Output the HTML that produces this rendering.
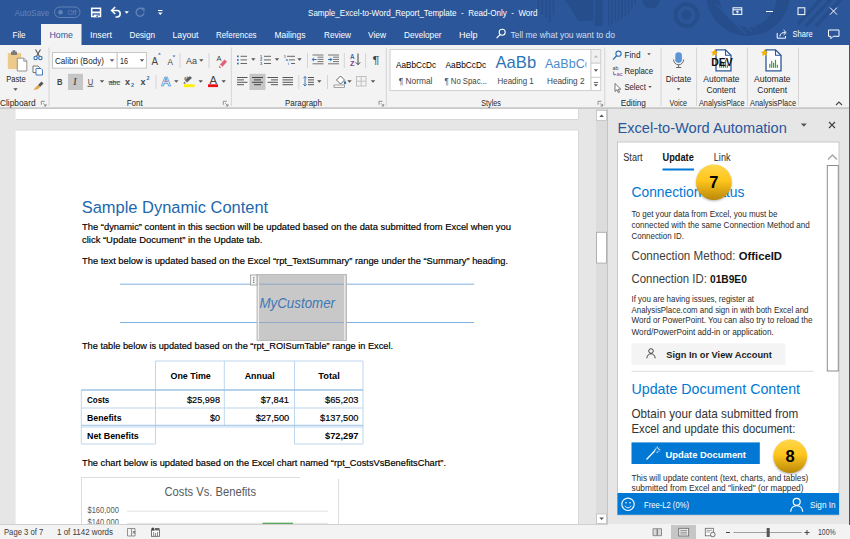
<!DOCTYPE html>
<html lang="en"><head><meta charset="utf-8"><title>Sample_Excel-to-Word_Report_Template - Read-Only - Word</title>
<style>
html,body{margin:0;padding:0;background:#e6e6e6;overflow:hidden}
body{width:850px;height:539px;position:relative;font-family:"Liberation Sans", sans-serif}
.abs{position:absolute}
#titlebar{left:0;top:0;width:850px;height:45px;background:#2b579a}
#ribbon{left:0;top:45px;width:850px;height:63px;background:#f3f3f3;border-bottom:1px solid #d2d2d2;box-sizing:border-box}
#docarea{left:0;top:108px;width:608px;height:416px;background:#e6e6e6}
#pane{left:608px;top:108px;width:242px;height:416px;background:#e6e6e6}
#statusbar{left:0;top:524px;width:850px;height:15px;background:#f3f3f3}
svg{position:absolute;left:0;top:0;font-family:"Liberation Sans", sans-serif}
svg text{white-space:pre}
</style></head><body>
<div id="titlebar" class="abs"></div>
<div id="ribbon" class="abs"></div>
<div id="docarea" class="abs"></div>
<div id="pane" class="abs"></div>
<div id="statusbar" class="abs"></div>
<svg width="850" height="539" viewBox="0 0 850 539">
<clipPath id="tbclip"><rect x="0" y="0" width="850" height="45"/></clipPath>
<g clip-path="url(#tbclip)" fill="#264e8d" stroke="none"><rect x="537.5" y="0" width="1.8" height="10"/><rect x="541.3" y="0" width="1.8" height="14"/><rect x="545" y="0" width="1.8" height="17"/><rect x="548.7" y="0" width="2" height="22"/><rect x="552.6" y="0" width="1.8" height="15"/><path d="M565 0 L578 20 L578 0z"/><rect x="578" y="0" width="15.5" height="21"/><rect x="595" y="0" width="7.5" height="26"/><rect x="608" y="0" width="1.6" height="25"/><rect x="611.3" y="0" width="1.6" height="24"/><rect x="614.6" y="0" width="1.6" height="22.5"/><rect x="617.9" y="0" width="1.6" height="21"/><rect x="621.2" y="0" width="1.6" height="19"/><rect x="624.5" y="0" width="1.6" height="16.5"/><rect x="627.8" y="0" width="1.6" height="13.5"/><rect x="631.1" y="0" width="1.6" height="9.5"/><rect x="634.4" y="0" width="1.6" height="4"/><path d="M642 0a9 8.5 0 0 0 18 0z"/><circle cx="686.5" cy="15" r="5"/><path d="M706 -6a42 42 0 0 0 84 0h-13a29 33 0 0 1 -58 0z"/></g>
<g clip-path="url(#tbclip)" fill="none" stroke="#264e8d"><circle cx="686.5" cy="15" r="11" stroke-width="4"/><path d="M822 -2L798 24M832 -2L806 26M842 -2L816 26" stroke-width="3.5"/></g>
<g clip-path="url(#tbclip)" stroke="#2b579a" stroke-width="1.6" fill="none"><path d="M716 4l30 30M722 2l30 30M728 0l28 28M734 -2l26 26"/></g>
<text x="14.7" y="16" font-size="9.3" fill="#6382b6" textLength="34.6" lengthAdjust="spacingAndGlyphs">AutoSave</text>
<rect x="54.5" y="7" width="25.5" height="10.5" fill="none" stroke="#6382b6" stroke-width="1" rx="5.2"/>
<circle cx="60.5" cy="12.2" r="2.2" fill="#6382b6"/>
<text x="67.5" y="15" font-size="7.5" fill="#6382b6" textLength="9" lengthAdjust="spacingAndGlyphs">Off</text>
<rect x="91.7" y="8.3" width="8.8" height="8.2" fill="none" stroke="#fff" stroke-width="1.5"/>
<rect x="91.7" y="11.5" width="8.8" height="1.8" fill="#fff"/>
<rect x="93.8" y="14.6" width="4.7" height="2.6" fill="#fff"/>
<rect x="96.4" y="15.4" width="1.4" height="1.8" fill="#2b579a"/>
<path d="M112 10.5h5a3.2 3.2 0 0 1 0 6.4h-1.5" fill="none" stroke="#fff" stroke-width="1.5"/>
<path d="M115.2 7l-3.6 3.5l3.6 3.5" fill="none" stroke="#fff" stroke-width="1.5"/>
<path d="M124.5 11.3h4.4l-2.2 2.4z" fill="#fff"/>
<path d="M142.9 9.4a4 4 0 1 0 1.1 3.9" fill="none" stroke="#6382b6" stroke-width="1.4"/>
<path d="M140.4 8.3h3.5v3.5" fill="none" stroke="#6382b6" stroke-width="1.3"/>
<line x1="158" y1="10.5" x2="162.5" y2="10.5" stroke="#fff" stroke-width="1" />
<path d="M158 12.5h4.6l-2.3 2.5z" fill="#fff"/>
<text x="308" y="16" font-size="9.6" fill="#fff" textLength="229.5" lengthAdjust="spacingAndGlyphs">Sample_Excel-to-Word_Report_Template  -  Read-Only  -  Word</text>
<rect x="733" y="7.8" width="8.8" height="6.6" fill="none" stroke="#fff" stroke-width="1"/>
<line x1="733" y1="9.8" x2="741.8" y2="9.8" stroke="#fff" stroke-width="1" />
<path d="M737.4 13.6V11M736 12.2l1.4-1.3l1.4 1.3" fill="none" stroke="#fff" stroke-width="0.9"/>
<line x1="766" y1="11.5" x2="773" y2="11.5" stroke="#fff" stroke-width="1" />
<rect x="798" y="7.8" width="6.8" height="6.8" fill="none" stroke="#fff" stroke-width="1"/>
<path d="M830 7.6l7 7M837 7.6l-7 7" fill="none" stroke="#fff" stroke-width="1"/>
<rect x="41" y="24" width="40.5" height="21.5" fill="#f3f3f3"/>
<text x="12.5" y="37.5" font-size="9.4" fill="#fff" textLength="13" lengthAdjust="spacingAndGlyphs">File</text>
<text x="49.5" y="37.5" font-size="9.4" fill="#2b579a" textLength="23.5" lengthAdjust="spacingAndGlyphs">Home</text>
<text x="90" y="37.5" font-size="9.4" fill="#fff" textLength="22" lengthAdjust="spacingAndGlyphs">Insert</text>
<text x="129.5" y="37.5" font-size="9.4" fill="#fff" textLength="25.5" lengthAdjust="spacingAndGlyphs">Design</text>
<text x="172.5" y="37.5" font-size="9.4" fill="#fff" textLength="26" lengthAdjust="spacingAndGlyphs">Layout</text>
<text x="216" y="37.5" font-size="9.4" fill="#fff" textLength="40.5" lengthAdjust="spacingAndGlyphs">References</text>
<text x="274.5" y="37.5" font-size="9.4" fill="#fff" textLength="31" lengthAdjust="spacingAndGlyphs">Mailings</text>
<text x="324" y="37.5" font-size="9.4" fill="#fff" textLength="27" lengthAdjust="spacingAndGlyphs">Review</text>
<text x="368" y="37.5" font-size="9.4" fill="#fff" textLength="18" lengthAdjust="spacingAndGlyphs">View</text>
<text x="404" y="37.5" font-size="9.4" fill="#fff" textLength="37.5" lengthAdjust="spacingAndGlyphs">Developer</text>
<text x="459" y="37.5" font-size="9.4" fill="#fff" textLength="18.5" lengthAdjust="spacingAndGlyphs">Help</text>
<circle cx="502.2" cy="32.2" r="3" fill="none" stroke="#fff" stroke-width="1.1"/>
<line x1="500" y1="34.6" x2="496.6" y2="38.2" stroke="#fff" stroke-width="1.2" />
<text x="510.5" y="37.5" font-size="9.2" fill="#d5deec" textLength="104.5" lengthAdjust="spacingAndGlyphs">Tell me what you want to do</text>
<path d="M777.2 33v5.2h8.3v-2.2" fill="none" stroke="#fff" stroke-width="1"/>
<path d="M779.8 36.5c0.3-2.8 2.2-4 5.4-4M783.6 30l2.6 2.5l-2.6 2.5" fill="none" stroke="#fff" stroke-width="1"/>
<text x="792.6" y="37.4" font-size="9.4" fill="#fff" textLength="20" lengthAdjust="spacingAndGlyphs">Share</text>
<path d="M828.5 30h10.5v6.3h-5.8l-2.4 2.4v-2.4h-2.3z" fill="none" stroke="#fff" stroke-width="1"/>
<line x1="49" y1="47.5" x2="49" y2="106" stroke="#d4d4d4" stroke-width="1" />
<line x1="231.3" y1="47.5" x2="231.3" y2="106" stroke="#d4d4d4" stroke-width="1" />
<line x1="386.3" y1="47.5" x2="386.3" y2="106" stroke="#d4d4d4" stroke-width="1" />
<line x1="604.8" y1="47.5" x2="604.8" y2="106" stroke="#d4d4d4" stroke-width="1" />
<line x1="661" y1="47.5" x2="661" y2="106" stroke="#d4d4d4" stroke-width="1" />
<line x1="696.6" y1="47.5" x2="696.6" y2="106" stroke="#d4d4d4" stroke-width="1" />
<line x1="747.4" y1="47.5" x2="747.4" y2="106" stroke="#d4d4d4" stroke-width="1" />
<line x1="798.5" y1="47.5" x2="798.5" y2="106" stroke="#d4d4d4" stroke-width="1" />
<text x="0" y="105.7" font-size="8.7" fill="#262626" textLength="35.6" lengthAdjust="spacingAndGlyphs">Clipboard</text>
<text x="126.7" y="105.7" font-size="8.7" fill="#262626" textLength="16" lengthAdjust="spacingAndGlyphs">Font</text>
<text x="285" y="105.7" font-size="8.7" fill="#262626" textLength="36.8" lengthAdjust="spacingAndGlyphs">Paragraph</text>
<text x="481.3" y="105.7" font-size="8.7" fill="#262626" textLength="19.5" lengthAdjust="spacingAndGlyphs">Styles</text>
<text x="620.7" y="105.7" font-size="8.7" fill="#262626" textLength="25.3" lengthAdjust="spacingAndGlyphs">Editing</text>
<text x="669.6" y="105.7" font-size="8.7" fill="#262626" textLength="17.5" lengthAdjust="spacingAndGlyphs">Voice</text>
<text x="699" y="105.7" font-size="8.7" fill="#262626" textLength="45.5" lengthAdjust="spacingAndGlyphs">AnalysisPlace</text>
<text x="750" y="105.7" font-size="8.7" fill="#262626" textLength="46" lengthAdjust="spacingAndGlyphs">AnalysisPlace</text>
<path d="M41.3 104.8v-3.5h3.5" fill="none" stroke="#777" stroke-width="0.8"/>
<path d="M43.3 103.3l2.5 2.5M46.0 103.89999999999999v2.1h-2.1" fill="none" stroke="#777" stroke-width="0.8"/>
<path d="M223.3 104.8v-3.5h3.5" fill="none" stroke="#777" stroke-width="0.8"/>
<path d="M225.3 103.3l2.5 2.5M228.0 103.89999999999999v2.1h-2.1" fill="none" stroke="#777" stroke-width="0.8"/>
<path d="M379 104.8v-3.5h3.5" fill="none" stroke="#777" stroke-width="0.8"/>
<path d="M381 103.3l2.5 2.5M383.7 103.89999999999999v2.1h-2.1" fill="none" stroke="#777" stroke-width="0.8"/>
<path d="M598 104.8v-3.5h3.5" fill="none" stroke="#777" stroke-width="0.8"/>
<path d="M600 103.3l2.5 2.5M602.7 103.89999999999999v2.1h-2.1" fill="none" stroke="#777" stroke-width="0.8"/>
<path d="M836 105l3-3l3 3" fill="none" stroke="#444" stroke-width="1.1"/>
<rect x="7.8" y="53" width="13.4" height="16" fill="#edc98a" rx="1"/>
<rect x="11" y="51.5" width="6" height="3.5" fill="#7a7a7a" rx="0.8"/>
<rect x="12.7" y="50.2" width="2.6" height="2" fill="#7a7a7a"/>
<path d="M17.3 58.2h6.5l3 3v9.8h-9.5z" fill="#fff" stroke="#8a8a8a" stroke-width="0.9"/>
<path d="M23.8 58.2v3h3" fill="none" stroke="#8a8a8a" stroke-width="0.9"/>
<text x="6.2" y="81.7" font-size="9" fill="#262626" textLength="19.5" lengthAdjust="spacingAndGlyphs">Paste</text>
<path d="M13.3 88.3h4.4l-2.2 2.4z" fill="#555"/>
<path d="M35.5 49.5l4.2 7.2M40.5 49.5l-4.2 7.2" fill="none" stroke="#555" stroke-width="1.1"/>
<circle cx="35.6" cy="58" r="1.7" fill="none" stroke="#2f6fb5" stroke-width="1.1"/><circle cx="40.4" cy="58" r="1.7" fill="none" stroke="#2f6fb5" stroke-width="1.1"/>
<path d="M33 66h5l1.5 1.5v5h-6.5z" fill="#fff" stroke="#666" stroke-width="0.9"/>
<path d="M36 68.5h5l1.5 1.5v5h-6.5z" fill="#fff" stroke="#2f6fb5" stroke-width="0.9"/>
<path d="M41.5 81.5l2 2l-3.5 3.5l-2-2z" fill="#555"/>
<path d="M38 85l2 2c-1.5 2.5-4 3.2-6.5 2.5c1.5-1 2.2-3 4.5-4.5z" fill="#e3a84a"/>
<rect x="52.5" y="52.5" width="64.7" height="15.7" fill="#fff" stroke="#c6c6c6" stroke-width="1"/>
<rect x="117.2" y="52.5" width="29.2" height="15.7" fill="#fff" stroke="#c6c6c6" stroke-width="1"/>
<text x="55" y="63.8" font-size="9" fill="#262626" textLength="49" lengthAdjust="spacingAndGlyphs">Calibri (Body)</text>
<text x="120" y="63.8" font-size="9" fill="#262626" textLength="8" lengthAdjust="spacingAndGlyphs">16</text>
<path d="M109.8 59.3h4.4l-2.2 2.4z" fill="#555"/>
<path d="M139.8 59.3h4.4l-2.2 2.4z" fill="#555"/>
<text x="151.6" y="65" font-size="10" fill="#444" textLength="6.5" lengthAdjust="spacingAndGlyphs">A</text>
<path d="M158 54.5l1.5-1.8l1.5 1.8z" fill="#2f6fb5"/>
<text x="167.5" y="65" font-size="8.5" fill="#444" textLength="5.5" lengthAdjust="spacingAndGlyphs">A</text>
<path d="M172.5 55.5l1.5 1.8l1.5-1.8z" fill="#2f6fb5"/>
<line x1="180" y1="53" x2="180" y2="68" stroke="#d4d4d4" stroke-width="1" />
<text x="186" y="64" font-size="9.5" fill="#444" textLength="11" lengthAdjust="spacingAndGlyphs">Aa</text>
<path d="M199.10000000000002 59.3h4.4l-2.2 2.4z" fill="#555"/>
<line x1="209" y1="53" x2="209" y2="68" stroke="#d4d4d4" stroke-width="1" />
<text x="216.5" y="61" font-size="7.5" fill="#444" textLength="5" lengthAdjust="spacingAndGlyphs">A</text>
<path d="M220 64.5l4.5-5l2.5 2.3l-4.5 5z" fill="#e2607a"/>
<path d="M219 65.5l2.5 2.3h-2.5z" fill="#e2607a"/>
<rect x="68" y="73.8" width="15" height="16.2" fill="#c6c6c6"/>
<text x="57" y="85" font-size="9" fill="#444" textLength="5.5" lengthAdjust="spacingAndGlyphs" font-weight="bold">B</text>
<text x="73.5" y="85" font-size="9.5" fill="#444" textLength="3" lengthAdjust="spacingAndGlyphs" font-style="italic" font-family="Liberation Serif,serif" font-weight="bold">I</text>
<text x="87.8" y="84.5" font-size="9" fill="#444" textLength="5.5" lengthAdjust="spacingAndGlyphs">U</text>
<line x1="87.5" y1="86.3" x2="93.5" y2="86.3" stroke="#444" stroke-width="0.9" />
<path d="M99.8 80.3h4.4l-2.2 2.4z" fill="#555"/>
<text x="108.7" y="84.5" font-size="7.5" fill="#444" textLength="11.3" lengthAdjust="spacingAndGlyphs">abc</text>
<line x1="108.3" y1="82" x2="120.3" y2="82" stroke="#444" stroke-width="0.7" />
<text x="125" y="84.5" font-size="9" fill="#444" textLength="5" lengthAdjust="spacingAndGlyphs" font-weight="bold">x</text>
<text x="131" y="86.5" font-size="5" fill="#2f6fb5" textLength="3" lengthAdjust="spacingAndGlyphs" font-weight="bold">2</text>
<text x="140.5" y="84.5" font-size="9" fill="#444" textLength="5" lengthAdjust="spacingAndGlyphs" font-weight="bold">x</text>
<text x="146.5" y="80" font-size="5" fill="#2f6fb5" textLength="3" lengthAdjust="spacingAndGlyphs" font-weight="bold">2</text>
<line x1="156" y1="75" x2="156" y2="89" stroke="#d4d4d4" stroke-width="1" />
<text x="161" y="85.6" font-size="13" fill="#ffffff" textLength="9.8" lengthAdjust="spacingAndGlyphs" font-weight="bold" stroke="#3a78bd" stroke-width="0.65">A</text>
<path d="M174.10000000000002 80.3h4.4l-2.2 2.4z" fill="#555"/>
<path d="M185 80.5l5-4.5l2 2l-5 4.5zM184 81.5l2 2l-2.4 0.3z" fill="#666"/>
<text x="184" y="80" font-size="5" fill="#444" textLength="5.5" lengthAdjust="spacingAndGlyphs">ab</text>
<rect x="184" y="84.3" width="10.5" height="2.8" fill="#ffee00"/>
<path d="M198.5 80.3h4.4l-2.2 2.4z" fill="#555"/>
<text x="209.5" y="83.5" font-size="10" fill="#444" textLength="7.5" lengthAdjust="spacingAndGlyphs">A</text>
<rect x="208" y="84.3" width="10" height="2.8" fill="#ee1111"/>
<path d="M221.5 80.3h4.4l-2.2 2.4z" fill="#555"/>
<rect x="237" y="55.5" width="1.7" height="1.7" fill="#2f6fb5"/>
<line x1="240.5" y1="56.3" x2="247" y2="56.3" stroke="#666" stroke-width="1" />
<rect x="237" y="59.1" width="1.7" height="1.7" fill="#2f6fb5"/>
<line x1="240.5" y1="59.9" x2="247" y2="59.9" stroke="#666" stroke-width="1" />
<rect x="237" y="62.7" width="1.7" height="1.7" fill="#2f6fb5"/>
<line x1="240.5" y1="63.5" x2="247" y2="63.5" stroke="#666" stroke-width="1" />
<path d="M251.10000000000002 58.3h4.4l-2.2 2.4z" fill="#555"/>
<text x="260" y="57.8" font-size="3.8" fill="#2f6fb5" font-weight="bold">1</text>
<line x1="264" y1="56.3" x2="271" y2="56.3" stroke="#666" stroke-width="1" />
<text x="260" y="61.4" font-size="3.8" fill="#2f6fb5" font-weight="bold">2</text>
<line x1="264" y1="59.9" x2="271" y2="59.9" stroke="#666" stroke-width="1" />
<text x="260" y="65.0" font-size="3.8" fill="#2f6fb5" font-weight="bold">3</text>
<line x1="264" y1="63.5" x2="271" y2="63.5" stroke="#666" stroke-width="1" />
<path d="M274.8 58.3h4.4l-2.2 2.4z" fill="#555"/>
<text x="283.7" y="57.8" font-size="3.8" fill="#2f6fb5" font-weight="bold">1</text>
<line x1="287" y1="56.3" x2="295" y2="56.3" stroke="#666" stroke-width="1" />
<text x="285.7" y="61.4" font-size="3.8" fill="#2f6fb5" font-weight="bold">a</text>
<line x1="289" y1="59.9" x2="295" y2="59.9" stroke="#666" stroke-width="1" />
<text x="287.7" y="65.0" font-size="3.8" fill="#2f6fb5" font-weight="bold">i</text>
<line x1="291" y1="63.5" x2="295" y2="63.5" stroke="#666" stroke-width="1" />
<path d="M297.3 58.3h4.4l-2.2 2.4z" fill="#555"/>
<line x1="307.5" y1="53" x2="307.5" y2="68" stroke="#d4d4d4" stroke-width="1" />
<line x1="312.5" y1="55.0" x2="323.5" y2="55.0" stroke="#666" stroke-width="0.9" />
<line x1="317.5" y1="57.2" x2="323.5" y2="57.2" stroke="#666" stroke-width="0.9" />
<line x1="317.5" y1="59.4" x2="323.5" y2="59.4" stroke="#666" stroke-width="0.9" />
<line x1="317.5" y1="61.6" x2="323.5" y2="61.6" stroke="#666" stroke-width="0.9" />
<line x1="312.5" y1="63.8" x2="323.5" y2="63.8" stroke="#666" stroke-width="0.9" />
<path d="M316.5 59.5h-4M314 57.7l-1.8 1.8l1.8 1.8" fill="none" stroke="#2f6fb5" stroke-width="1"/>
<line x1="328" y1="55.0" x2="339" y2="55.0" stroke="#666" stroke-width="0.9" />
<line x1="333" y1="57.2" x2="339" y2="57.2" stroke="#666" stroke-width="0.9" />
<line x1="333" y1="59.4" x2="339" y2="59.4" stroke="#666" stroke-width="0.9" />
<line x1="333" y1="61.6" x2="339" y2="61.6" stroke="#666" stroke-width="0.9" />
<line x1="328" y1="63.8" x2="339" y2="63.8" stroke="#666" stroke-width="0.9" />
<path d="M328 59.5h4M330 57.7l1.8 1.8l-1.8 1.8" fill="none" stroke="#2f6fb5" stroke-width="1"/>
<line x1="344.3" y1="53" x2="344.3" y2="68" stroke="#d4d4d4" stroke-width="1" />
<text x="350" y="58.5" font-size="6.5" fill="#2f6fb5" textLength="4.5" lengthAdjust="spacingAndGlyphs" font-weight="bold">A</text>
<text x="350" y="65.5" font-size="6.5" fill="#7a3fa0" textLength="4.5" lengthAdjust="spacingAndGlyphs" font-weight="bold">Z</text>
<path d="M358 53.5v11M355.8 62.3l2.2 2.4l2.2-2.4" fill="none" stroke="#444" stroke-width="1"/>
<line x1="365.6" y1="53" x2="365.6" y2="68" stroke="#d4d4d4" stroke-width="1" />
<text x="372.5" y="64" font-size="11" fill="#444" textLength="7" lengthAdjust="spacingAndGlyphs">¶</text>
<rect x="249.5" y="73.8" width="16" height="16.2" fill="#c6c6c6"/>
<line x1="237" y1="77.5" x2="247.5" y2="77.5" stroke="#555" stroke-width="1" />
<line x1="237" y1="79.9" x2="244" y2="79.9" stroke="#555" stroke-width="1" />
<line x1="237" y1="82.3" x2="247.5" y2="82.3" stroke="#555" stroke-width="1" />
<line x1="237" y1="84.7" x2="244" y2="84.7" stroke="#555" stroke-width="1" />
<line x1="252" y1="77.5" x2="263" y2="77.5" stroke="#444" stroke-width="1" />
<line x1="254" y1="79.9" x2="261" y2="79.9" stroke="#444" stroke-width="1" />
<line x1="252" y1="82.3" x2="263" y2="82.3" stroke="#444" stroke-width="1" />
<line x1="254" y1="84.7" x2="261" y2="84.7" stroke="#444" stroke-width="1" />
<line x1="267.5" y1="77.5" x2="278.0" y2="77.5" stroke="#555" stroke-width="1" />
<line x1="271.0" y1="79.9" x2="278.0" y2="79.9" stroke="#555" stroke-width="1" />
<line x1="267.5" y1="82.3" x2="278.0" y2="82.3" stroke="#555" stroke-width="1" />
<line x1="271.0" y1="84.7" x2="278.0" y2="84.7" stroke="#555" stroke-width="1" />
<line x1="282.5" y1="77.5" x2="293.0" y2="77.5" stroke="#555" stroke-width="1" />
<line x1="282.5" y1="79.9" x2="293.0" y2="79.9" stroke="#555" stroke-width="1" />
<line x1="282.5" y1="82.3" x2="293.0" y2="82.3" stroke="#555" stroke-width="1" />
<line x1="282.5" y1="84.7" x2="293.0" y2="84.7" stroke="#555" stroke-width="1" />
<line x1="298.8" y1="75" x2="298.8" y2="89" stroke="#d4d4d4" stroke-width="1" />
<line x1="308" y1="77.5" x2="314" y2="77.5" stroke="#555" stroke-width="1" />
<line x1="308" y1="79.9" x2="314" y2="79.9" stroke="#555" stroke-width="1" />
<line x1="308" y1="82.3" x2="314" y2="82.3" stroke="#555" stroke-width="1" />
<line x1="308" y1="84.7" x2="314" y2="84.7" stroke="#555" stroke-width="1" />
<path d="M305 76.5v9.5M303.3 78.3l1.7-1.8l1.7 1.8M303.3 84.2l1.7 1.8l1.7-1.8" fill="none" stroke="#2f6fb5" stroke-width="0.9"/>
<path d="M317.1 80.3h4.4l-2.2 2.4z" fill="#555"/>
<line x1="327.5" y1="75" x2="327.5" y2="89" stroke="#d4d4d4" stroke-width="1" />
<path d="M336.5 80l4-4l4 4l-4 4z" fill="#fff" stroke="#555" stroke-width="0.9"/>
<path d="M345 80.5c0.8 1.3 1.2 2 1.2 2.6a1.2 1.2 0 0 1-2.4 0c0-0.6 0.4-1.3 1.2-2.6z" fill="#2f6fb5"/>
<rect x="334" y="85" width="10.5" height="2.3" fill="#fff" stroke="#777" stroke-width="0.7"/>
<path d="M347.3 80.3h4.4l-2.2 2.4z" fill="#555"/>
<g stroke="#bcbcbc" stroke-width="0.9" fill="none"><rect x="356.5" y="76.5" width="9.5" height="9.5"/><line x1="361.2" y1="76.5" x2="361.2" y2="86"/><line x1="356.5" y1="81.2" x2="366" y2="81.2"/></g>
<path d="M370.8 80.3h4.4l-2.2 2.4z" fill="#555"/>
<rect x="390" y="49.5" width="201" height="41" fill="#fff" stroke="#d0d0d0" stroke-width="1"/>
<text x="396" y="67.6" font-size="9.8" fill="#000" textLength="40" lengthAdjust="spacingAndGlyphs">AaBbCcDc</text>
<text x="398.7" y="84.1" font-size="9" fill="#444" textLength="33.8" lengthAdjust="spacingAndGlyphs">¶ Normal</text>
<text x="445.5" y="67.6" font-size="9.8" fill="#000" textLength="40.7" lengthAdjust="spacingAndGlyphs">AaBbCcDc</text>
<text x="444.5" y="84.1" font-size="9" fill="#444" textLength="42.5" lengthAdjust="spacingAndGlyphs">¶ No Spac...</text>
<text x="495.5" y="68.4" font-size="16.4" fill="#2e74b5" textLength="40.7" lengthAdjust="spacingAndGlyphs">AaBb</text>
<text x="497.5" y="84.1" font-size="9" fill="#444" textLength="36.2" lengthAdjust="spacingAndGlyphs">Heading 1</text>
<clipPath id="galclip"><rect x="390" y="49.5" width="196.5" height="41"/></clipPath>
<text x="545" y="68.4" font-size="12.3" fill="#4a8ccb" textLength="46" lengthAdjust="spacingAndGlyphs" clip-path="url(#galclip)">AaBbCc</text>
<text x="547" y="84.1" font-size="9" fill="#444" textLength="37.5" lengthAdjust="spacingAndGlyphs">Heading 2</text>
<rect x="591" y="49.5" width="9.7" height="13.7" fill="#f0f0f0" stroke="#d0d0d0" stroke-width="1"/>
<rect x="591" y="63.2" width="9.7" height="14.2" fill="#fff" stroke="#d0d0d0" stroke-width="1"/>
<rect x="591" y="77.4" width="9.7" height="13.1" fill="#fff" stroke="#d0d0d0" stroke-width="1"/>
<path d="M593.8 57.5h4.2l-2.1-2.3z" fill="#b5b5b5"/>
<path d="M593.81 69.36h4.18l-2.09 2.28z" fill="#555"/>
<line x1="593.8" y1="82.5" x2="598" y2="82.5" stroke="#555" stroke-width="0.9" />
<path d="M593.81 84.16h4.18l-2.09 2.28z" fill="#555"/>
<circle cx="618.5" cy="53.7" r="2.6" fill="none" stroke="#2f6fb5" stroke-width="1.1"/>
<line x1="616.6" y1="55.8" x2="613" y2="59.6" stroke="#2f6fb5" stroke-width="1.3" />
<text x="624.5" y="57.7" font-size="9" fill="#262626" textLength="16" lengthAdjust="spacingAndGlyphs">Find</text>
<path d="M647.24 53.24h3.5200000000000005l-1.7600000000000002 1.92z" fill="#555"/>
<text x="612.5" y="70" font-size="6" fill="#444" textLength="6" lengthAdjust="spacingAndGlyphs">ab</text>
<text x="616.5" y="75.5" font-size="6" fill="#7a3fa0" textLength="6" lengthAdjust="spacingAndGlyphs">ac</text>
<path d="M613.5 71.5v3h2M614.6 73.6l1 1l-1 1" fill="none" stroke="#2f6fb5" stroke-width="0.7"/>
<text x="624.5" y="73.7" font-size="9" fill="#262626" textLength="28.5" lengthAdjust="spacingAndGlyphs">Replace</text>
<path d="M615 83.5v8l2-1.8l1.4 3l1.2-0.6l-1.4-2.9h2.6z" fill="#fff" stroke="#555" stroke-width="0.8"/>
<text x="624.5" y="90" font-size="9" fill="#262626" textLength="21.3" lengthAdjust="spacingAndGlyphs">Select</text>
<path d="M648.24 86.04h3.5200000000000005l-1.7600000000000002 1.92z" fill="#555"/>
<rect x="675.3" y="52.3" width="6.6" height="10.6" fill="#5b95d6" rx="3.3"/>
<path d="M673.6 59.5a5 5.3 0 0 0 10 0M678.6 64.8v2.6M676 67.5h5.2" fill="none" stroke="#666" stroke-width="1"/>
<text x="665.8" y="82.1" font-size="9" fill="#262626" textLength="25.4" lengthAdjust="spacingAndGlyphs">Dictate</text>
<path d="M676.74 88.34h3.5200000000000005l-1.7600000000000002 1.92z" fill="#555"/>
<rect x="712.5" y="48.8" width="20" height="22.4" fill="#fbfbfb"/>
<path d="M716 49.8h9.5l5.5 5.5v15.5h-15z" fill="#fff" stroke="#2b579a" stroke-width="1.3"/>
<path d="M725.5 49.8v5.5h5.5" fill="none" stroke="#2b579a" stroke-width="1.1"/>
<rect x="719.2" y="63.8" width="1.2" height="4" fill="#3c9a48"/>
<rect x="721.1" y="60.8" width="1.2" height="7" fill="#3c9a48"/>
<rect x="723.0" y="62.8" width="1.2" height="5" fill="#3c9a48"/>
<rect x="724.9000000000001" y="59.8" width="1.2" height="8" fill="#3c9a48"/>
<rect x="726.8000000000001" y="64.8" width="1.2" height="3" fill="#3c9a48"/>
<path d="M714.5 49.3l1.2 2.2l2.4 0.4l-1.8 1.7l0.4 2.4l-2.2-1.2l-2.2 1.2l0.4-2.4l-1.8-1.7l2.4-0.4z" fill="#f2b200"/>
<rect x="713" y="49" width="19.5" height="22" fill="#fff" opacity="0.0"/>
<text x="711.3" y="66.4" font-size="11" fill="#111" textLength="21.5" lengthAdjust="spacingAndGlyphs" font-weight="bold">DEV</text>
<text x="703.3" y="82.1" font-size="9" fill="#262626" textLength="36.2" lengthAdjust="spacingAndGlyphs">Automate</text>
<text x="706.4" y="93.2" font-size="9" fill="#262626" textLength="29.2" lengthAdjust="spacingAndGlyphs">Content</text>
<path d="M766 49.8h9.5l5.5 5.5v15.5h-15z" fill="#fff" stroke="#2b579a" stroke-width="1.3"/>
<path d="M775.5 49.8v5.5h5.5" fill="none" stroke="#2b579a" stroke-width="1.1"/>
<rect x="769.2" y="63.8" width="1.2" height="4" fill="#3c9a48"/>
<rect x="771.1" y="60.8" width="1.2" height="7" fill="#3c9a48"/>
<rect x="773.0" y="62.8" width="1.2" height="5" fill="#3c9a48"/>
<rect x="774.9000000000001" y="59.8" width="1.2" height="8" fill="#3c9a48"/>
<rect x="776.8000000000001" y="64.8" width="1.2" height="3" fill="#3c9a48"/>
<path d="M764.5 49.3l1.2 2.2l2.4 0.4l-1.8 1.7l0.4 2.4l-2.2-1.2l-2.2 1.2l0.4-2.4l-1.8-1.7l2.4-0.4z" fill="#f2b200"/>
<text x="754" y="82.1" font-size="9" fill="#262626" textLength="36.6" lengthAdjust="spacingAndGlyphs">Automate</text>
<text x="757.3" y="93.2" font-size="9" fill="#262626" textLength="29.7" lengthAdjust="spacingAndGlyphs">Content</text>
<line x1="0" y1="108.5" x2="850" y2="108.5" stroke="#c8c8c8" stroke-width="1" />
<rect x="15.6" y="109" width="562.4" height="10.5" fill="#fff"/>
<line x1="16" y1="119.5" x2="578" y2="119.5" stroke="#d8d8d8" stroke-width="1" />
<clipPath id="docclip"><rect x="0" y="109" width="608" height="416"/></clipPath>
<g clip-path="url(#docclip)">
<rect x="15.6" y="130" width="562.4" height="400" fill="#fff"/>
<line x1="16" y1="130" x2="578" y2="130" stroke="#dcdcdc" stroke-width="1" />
<line x1="578.5" y1="109" x2="578.5" y2="119.5" stroke="#d8d8d8" stroke-width="1" />
<line x1="578.5" y1="130" x2="578.5" y2="525" stroke="#d8d8d8" stroke-width="1" />
<text x="81.7" y="213.3" font-size="17.2" fill="#2167ae" textLength="186.5" lengthAdjust="spacingAndGlyphs">Sample Dynamic Content</text>
<text x="82" y="229.8" font-size="9.9" fill="#000" textLength="429" lengthAdjust="spacingAndGlyphs" stroke="#000" stroke-width="0.18">The “dynamic” content in this section will be updated based on the data submitted from Excel when you</text>
<text x="82" y="243" font-size="9.9" fill="#000" textLength="180.5" lengthAdjust="spacingAndGlyphs" stroke="#000" stroke-width="0.18">click “Update Document” in the Update tab.</text>
<text x="82" y="264.2" font-size="9.9" fill="#000" textLength="426" lengthAdjust="spacingAndGlyphs" stroke="#000" stroke-width="0.18">The text below is updated based on the Excel “rpt_TextSummary” range under the “Summary” heading.</text>
<line x1="120" y1="284.2" x2="474" y2="284.2" stroke="#7fb0e0" stroke-width="1" />
<line x1="120" y1="322.5" x2="474" y2="322.5" stroke="#7fb0e0" stroke-width="1" />
<rect x="257" y="274.5" width="89.5" height="66" fill="#c8c8c8" stroke="#b0b0b0" stroke-width="0.8"/>
<line x1="258.3" y1="275.5" x2="258.3" y2="340" stroke="#f5f5f5" stroke-width="1" />
<line x1="344.8" y1="275.5" x2="344.8" y2="340" stroke="#f5f5f5" stroke-width="1" />
<line x1="259" y1="284.2" x2="344" y2="284.2" stroke="#8fa9c6" stroke-width="1" />
<line x1="259" y1="322.5" x2="344" y2="322.5" stroke="#8fa9c6" stroke-width="1" />
<rect x="250.5" y="275" width="6.5" height="10" fill="#f4f4f4" stroke="#9a9a9a" stroke-width="0.8"/>
<rect x="253" y="277.2" width="1.4" height="1.2" fill="#777"/>
<rect x="253" y="279.5" width="1.4" height="1.2" fill="#777"/>
<rect x="253" y="281.8" width="1.4" height="1.2" fill="#777"/>
<text x="259.5" y="307.5" font-size="14" fill="#3f78b4" textLength="75.5" lengthAdjust="spacingAndGlyphs" font-style="italic">MyCustomer</text>
<text x="82" y="349.2" font-size="9.9" fill="#000" textLength="311" lengthAdjust="spacingAndGlyphs" stroke="#000" stroke-width="0.18">The table below is updated based on the “rpt_ROISumTable” range in Excel.</text>
<line x1="155.5" y1="361" x2="155.5" y2="444" stroke="#bdd7ee" stroke-width="1" />
<line x1="224.3" y1="361" x2="224.3" y2="426" stroke="#bdd7ee" stroke-width="1" />
<line x1="294.5" y1="361" x2="294.5" y2="444" stroke="#bdd7ee" stroke-width="1" />
<line x1="363" y1="361" x2="363" y2="444" stroke="#bdd7ee" stroke-width="1" />
<line x1="81.3" y1="390" x2="81.3" y2="444" stroke="#bdd7ee" stroke-width="1" />
<line x1="155.5" y1="361" x2="363" y2="361" stroke="#bdd7ee" stroke-width="1" />
<line x1="81.3" y1="390" x2="363" y2="390" stroke="#9cc2e5" stroke-width="1.6" />
<line x1="81.3" y1="408" x2="363" y2="408" stroke="#bdd7ee" stroke-width="1" />
<line x1="81.3" y1="425.3" x2="363" y2="425.3" stroke="#9cc2e5" stroke-width="1" />
<line x1="81.3" y1="427" x2="363" y2="427" stroke="#bdd7ee" stroke-width="1" />
<line x1="81.3" y1="444" x2="155.5" y2="444" stroke="#bdd7ee" stroke-width="1" />
<line x1="294.5" y1="444" x2="363" y2="444" stroke="#bdd7ee" stroke-width="1" />
<text x="170.5" y="379" font-size="9.9" fill="#000" textLength="40.3" lengthAdjust="spacingAndGlyphs" font-weight="bold">One Time</text>
<text x="244.7" y="379" font-size="9.9" fill="#000" textLength="30" lengthAdjust="spacingAndGlyphs" font-weight="bold">Annual</text>
<text x="318.3" y="379" font-size="9.9" fill="#000" textLength="21.5" lengthAdjust="spacingAndGlyphs" font-weight="bold">Total</text>
<text x="87" y="402.8" font-size="9.9" fill="#000" textLength="22.3" lengthAdjust="spacingAndGlyphs" font-weight="bold">Costs</text>
<text x="87" y="420.8" font-size="9.9" fill="#000" textLength="34.5" lengthAdjust="spacingAndGlyphs" font-weight="bold">Benefits</text>
<text x="87" y="438.8" font-size="9.9" fill="#000" textLength="51.8" lengthAdjust="spacingAndGlyphs" font-weight="bold">Net Benefits</text>
<text x="187" y="402.8" font-size="9.9" fill="#000" textLength="33" lengthAdjust="spacingAndGlyphs" stroke="#000" stroke-width="0.18">$25,998</text>
<text x="260.7" y="402.8" font-size="9.9" fill="#000" textLength="28.3" lengthAdjust="spacingAndGlyphs" stroke="#000" stroke-width="0.18">$7,841</text>
<text x="325" y="402.8" font-size="9.9" fill="#000" textLength="33.5" lengthAdjust="spacingAndGlyphs" stroke="#000" stroke-width="0.18">$65,203</text>
<text x="210" y="420.8" font-size="9.9" fill="#000" textLength="10" lengthAdjust="spacingAndGlyphs" stroke="#000" stroke-width="0.18">$0</text>
<text x="255.7" y="420.8" font-size="9.9" fill="#000" textLength="33.5" lengthAdjust="spacingAndGlyphs" stroke="#000" stroke-width="0.18">$27,500</text>
<text x="320" y="420.8" font-size="9.9" fill="#000" textLength="38.5" lengthAdjust="spacingAndGlyphs" stroke="#000" stroke-width="0.18">$137,500</text>
<text x="325" y="438.8" font-size="9.9" fill="#000" textLength="33.5" lengthAdjust="spacingAndGlyphs" font-weight="bold">$72,297</text>
<text x="82" y="465.8" font-size="9.9" fill="#000" textLength="364" lengthAdjust="spacingAndGlyphs" stroke="#000" stroke-width="0.18">The chart below is updated based on the Excel chart named “rpt_CostsVsBenefitsChart”.</text>
<rect x="81.5" y="477.5" width="257" height="60" fill="#fff" stroke="#dedede" stroke-width="1"/>
<rect x="300" y="477" width="40" height="2" fill="#fff"/>
<text x="164.5" y="496" font-size="12.2" fill="#595959" textLength="91.5" lengthAdjust="spacingAndGlyphs">Costs Vs. Benefits</text>
<text x="87.5" y="513" font-size="8.5" fill="#595959" textLength="31.3" lengthAdjust="spacingAndGlyphs">$160,000</text>
<text x="87.5" y="525.2" font-size="8.5" fill="#595959" textLength="31.3" lengthAdjust="spacingAndGlyphs">$140,000</text>
<line x1="127" y1="511.2" x2="328" y2="511.2" stroke="#e3e3e3" stroke-width="1" />
<line x1="127" y1="523.3" x2="328" y2="523.3" stroke="#e3e3e3" stroke-width="1" />
<rect x="262.5" y="522.7" width="30.5" height="3" fill="#5aa65a"/>
</g>
<rect x="596" y="109" width="11" height="416" fill="#dcdcdc"/>
<line x1="607.5" y1="109" x2="607.5" y2="525" stroke="#c4c4c4" stroke-width="1" />
<rect x="596.5" y="110.5" width="10" height="10" fill="#fff" stroke="#c0c0c0" stroke-width="0.8"/>
<path d="M599.3 117h4.6l-2.3-2.6z" fill="#555"/>
<rect x="596.5" y="514" width="10" height="9.5" fill="#fff" stroke="#c0c0c0" stroke-width="0.8"/>
<path d="M599.3 517.5h4.6l-2.3 2.6z" fill="#555"/>
<rect x="596.5" y="232.3" width="10" height="30.8" fill="#fff" stroke="#ababab" stroke-width="0.9"/>
<text x="617.5" y="133" font-size="15" fill="#2b579a" textLength="169.3" lengthAdjust="spacingAndGlyphs">Excel-to-Word Automation</text>
<path d="M800.8 123.6h6l-3 3.2z" fill="#555"/>
<path d="M829 122l6 6M835 122l-6 6" fill="none" stroke="#444" stroke-width="1.2"/>
<rect x="617.5" y="142" width="221.5" height="373" fill="#fff" stroke="#c8c8c8" stroke-width="1"/>
<clipPath id="paneclip"><rect x="618" y="142.5" width="220.5" height="350.5"/></clipPath>
<g clip-path="url(#paneclip)">
<text x="623.3" y="160.9" font-size="10" fill="#2b2b2b" textLength="19.2" lengthAdjust="spacingAndGlyphs">Start</text>
<text x="662.5" y="160.9" font-size="10" fill="#111" textLength="31.3" lengthAdjust="spacingAndGlyphs" font-weight="bold">Update</text>
<text x="713.8" y="160.9" font-size="10" fill="#2b2b2b" textLength="16.7" lengthAdjust="spacingAndGlyphs">Link</text>
<rect x="662.5" y="168.5" width="31.5" height="2" fill="#0078d4"/>
<text x="631.5" y="197.2" font-size="15.2" fill="#0078d4" textLength="112.8" lengthAdjust="spacingAndGlyphs">Connection Status</text>
<text x="631.5" y="217.2" font-size="8.7" fill="#2b2b2b" textLength="146" lengthAdjust="spacingAndGlyphs">To get your data from Excel, you must be</text>
<text x="631.5" y="228.1" font-size="8.7" fill="#2b2b2b" textLength="178.3" lengthAdjust="spacingAndGlyphs">connected with the same Connection Method and</text>
<text x="631.5" y="239.2" font-size="8.7" fill="#2b2b2b" textLength="52.5" lengthAdjust="spacingAndGlyphs">Connection ID.</text>
<text x="631.5" y="259.8" font-size="12" fill="#3d3d3d" textLength="107.3" lengthAdjust="spacingAndGlyphs">Connection Method: </text>
<text x="738.8" y="259.8" font-size="11.5" fill="#111" textLength="43.2" lengthAdjust="spacingAndGlyphs" font-weight="bold">OfficeID</text>
<text x="631.5" y="282.8" font-size="12" fill="#3d3d3d" textLength="78.5" lengthAdjust="spacingAndGlyphs">Connection ID: </text>
<text x="710" y="282.8" font-size="11.5" fill="#111" textLength="36.8" lengthAdjust="spacingAndGlyphs" font-weight="bold">01B9E0</text>
<text x="631.5" y="302.1" font-size="8.7" fill="#2b2b2b" textLength="122.5" lengthAdjust="spacingAndGlyphs">If you are having issues, register at</text>
<text x="631.5" y="312.7" font-size="8.7" fill="#2b2b2b" textLength="177" lengthAdjust="spacingAndGlyphs">AnalysisPlace.com and sign in with both Excel and</text>
<text x="631.5" y="323.3" font-size="8.7" fill="#2b2b2b" textLength="181" lengthAdjust="spacingAndGlyphs">Word or PowerPoint. You can also try to reload the</text>
<text x="631.5" y="334.5" font-size="8.7" fill="#2b2b2b" textLength="142.3" lengthAdjust="spacingAndGlyphs">Word/PowerPoint add-in or application.</text>
<rect x="631.5" y="343.4" width="154" height="21.6" fill="#f4f4f4"/>
<circle cx="651" cy="351" r="2.3" fill="none" stroke="#333" stroke-width="0.9"/>
<path d="M646.8 358.3c0.3-6 8.1-6 8.4 0" fill="none" stroke="#333" stroke-width="0.9"/>
<text x="666.3" y="358.1" font-size="9.7" fill="#222" textLength="105.5" lengthAdjust="spacingAndGlyphs" font-weight="bold">Sign In or View Account</text>
<line x1="631.5" y1="371.3" x2="813.5" y2="371.3" stroke="#dddddd" stroke-width="1" />
<text x="631.5" y="393.9" font-size="15" fill="#0078d4" textLength="168.5" lengthAdjust="spacingAndGlyphs">Update Document Content</text>
<text x="631.5" y="417.7" font-size="12.8" fill="#333" textLength="166.8" lengthAdjust="spacingAndGlyphs">Obtain your data submitted from</text>
<text x="631.5" y="433.0" font-size="12.8" fill="#333" textLength="163.9" lengthAdjust="spacingAndGlyphs">Excel and update this document:</text>
<rect x="631.5" y="442.4" width="128.3" height="21.6" fill="#0078d4"/>
<path d="M646.5 459.5l8.5-9" fill="none" stroke="#fff" stroke-width="1.2"/>
<path d="M657.2 446.5v2M657.2 451.5v1.5M654.5 449.7h1.6M658.5 449.7h1.8M655.3 447.8l0.9 0.9M659.2 447.8l-0.9 0.9M659.2 451.7l-0.9-0.9" fill="none" stroke="#fff" stroke-width="0.95"/>
<text x="665.5" y="458.0" font-size="9.6" fill="#fff" textLength="80.5" lengthAdjust="spacingAndGlyphs" font-weight="bold">Update Document</text>
<text x="631.5" y="480.5" font-size="8.7" fill="#2b2b2b" textLength="176.8" lengthAdjust="spacingAndGlyphs">This will update content (text, charts, and tables)</text>
<text x="631.5" y="491.4" font-size="8.7" fill="#2b2b2b" textLength="172" lengthAdjust="spacingAndGlyphs">submitted from Excel and "linked" (or mapped)</text>
</g>
<path d="M828 159.5l4.5-4.5l4.5 4.5" fill="none" stroke="#a8a8a8" stroke-width="1.5"/>
<rect x="827.3" y="165.5" width="11" height="205.5" fill="#fff" stroke="#8c8c8c" stroke-width="1"/>
<rect x="617.5" y="493" width="221.5" height="21.8" fill="#0078d4"/>
<circle cx="628" cy="504.3" r="6.2" fill="none" stroke="#fff" stroke-width="1.1"/><circle cx="626" cy="502.7" r="0.8" fill="#fff"/><circle cx="630" cy="502.7" r="0.8" fill="#fff"/>
<path d="M624.8 505.8c1.5 2.6 4.9 2.6 6.4 0" fill="none" stroke="#fff" stroke-width="0.9"/>
<text x="644" y="508" font-size="8.6" fill="#fff" textLength="45" lengthAdjust="spacingAndGlyphs">Free-L2 (0%)</text>
<circle cx="796.7" cy="501.8" r="3.5" fill="none" stroke="#fff" stroke-width="1.2"/>
<path d="M790.7 511.7c0.4-8 11.6-8 12 0" fill="none" stroke="#fff" stroke-width="1.2"/>
<text x="810" y="508" font-size="9.6" fill="#fff" textLength="25.6" lengthAdjust="spacingAndGlyphs">Sign In</text>
<defs><linearGradient id="gold" x1="0" y1="0" x2="0" y2="1"><stop offset="0" stop-color="#ffd64c"/><stop offset="0.45" stop-color="#ffc61c"/><stop offset="1" stop-color="#b98809"/></linearGradient><filter id="sh" x="-30%" y="-30%" width="160%" height="160%"><feGaussianBlur stdDeviation="1.3"/></filter></defs>
<circle cx="713.8" cy="183.39999999999998" r="17.8" fill="#000" opacity="0.28" filter="url(#sh)"/>
<circle cx="713.8" cy="182.2" r="17.8" fill="url(#gold)"/>
<text x="713.8" y="188.1" font-size="16.5" fill="#000" font-weight="bold" text-anchor="middle">7</text>
<circle cx="790.2" cy="457.5" r="16.8" fill="#000" opacity="0.28" filter="url(#sh)"/>
<circle cx="790.2" cy="456.3" r="16.8" fill="url(#gold)"/>
<text x="790.2" y="462.2" font-size="16.5" fill="#000" font-weight="bold" text-anchor="middle">8</text>
<line x1="849.5" y1="45" x2="849.5" y2="539" stroke="#2b579a" stroke-width="1" />
<rect x="0" y="525" width="850" height="14" fill="#f3f3f3"/>
<line x1="0" y1="524.5" x2="608" y2="524.5" stroke="#d0d0d0" stroke-width="1" />
<text x="4" y="534.6" font-size="8.4" fill="#3b3b3b" textLength="39.3" lengthAdjust="spacingAndGlyphs">Page 3 of 7</text>
<text x="57" y="534.6" font-size="8.4" fill="#3b3b3b" textLength="56" lengthAdjust="spacingAndGlyphs">1 of 1142 words</text>
<path d="M127.5 528.5h4v7.5h-4zM131.5 528.5h3.5v7.5h-3.5" fill="none" stroke="#777" stroke-width="0.8"/>
<path d="M132.8 531l2.4 2.6M135.2 531l-2.4 2.6" fill="none" stroke="#555" stroke-width="0.8"/>
<rect x="151.5" y="530" width="8" height="6.3" fill="#fff" stroke="#555" stroke-width="0.8"/>
<path d="M153.7 532v4M155.6 533v3M157.5 532v4" fill="none" stroke="#555" stroke-width="0.7"/>
<circle cx="152.8" cy="529" r="1.5" fill="#444"/>
<rect x="155" y="528.2" width="4.5" height="1.5" fill="#444"/>
<path d="M653 528.7h4v7h-4zM657.5 528.7h4v7h-4z" fill="#d9d9d9" stroke="#777" stroke-width="0.8"/>
<rect x="671" y="525" width="25" height="14" fill="#c6c6c6"/>
<rect x="678.7" y="528.3" width="10" height="7.7" fill="#e9e9e9" stroke="#666" stroke-width="0.8"/>
<line x1="680.3" y1="530.5" x2="687" y2="530.5" stroke="#777" stroke-width="0.7" />
<line x1="680.3" y1="532.3" x2="687" y2="532.3" stroke="#777" stroke-width="0.7" />
<line x1="680.3" y1="534" x2="687" y2="534" stroke="#777" stroke-width="0.7" />
<rect x="705.3" y="528.3" width="8" height="7.5" fill="#fff" stroke="#666" stroke-width="0.8"/>
<line x1="706.5" y1="530.3" x2="712" y2="530.3" stroke="#777" stroke-width="0.7" />
<line x1="706.5" y1="532" x2="710" y2="532" stroke="#777" stroke-width="0.7" />
<circle cx="712.8" cy="534.5" r="2.3" fill="#f3f3f3" stroke="#555" stroke-width="0.8"/>
<line x1="726" y1="532.5" x2="730" y2="532.5" stroke="#444" stroke-width="1" />
<line x1="733.4" y1="532.5" x2="801.7" y2="532.5" stroke="#8a8a8a" stroke-width="0.8" />
<rect x="766.7" y="528" width="3" height="9" fill="#555"/>
<path d="M804.5 532.5h5M807 530v5" fill="none" stroke="#444" stroke-width="1"/>
<text x="818" y="535" font-size="8.6" fill="#3b3b3b" textLength="17.7" lengthAdjust="spacingAndGlyphs">100%</text>
</svg>
</body></html>
